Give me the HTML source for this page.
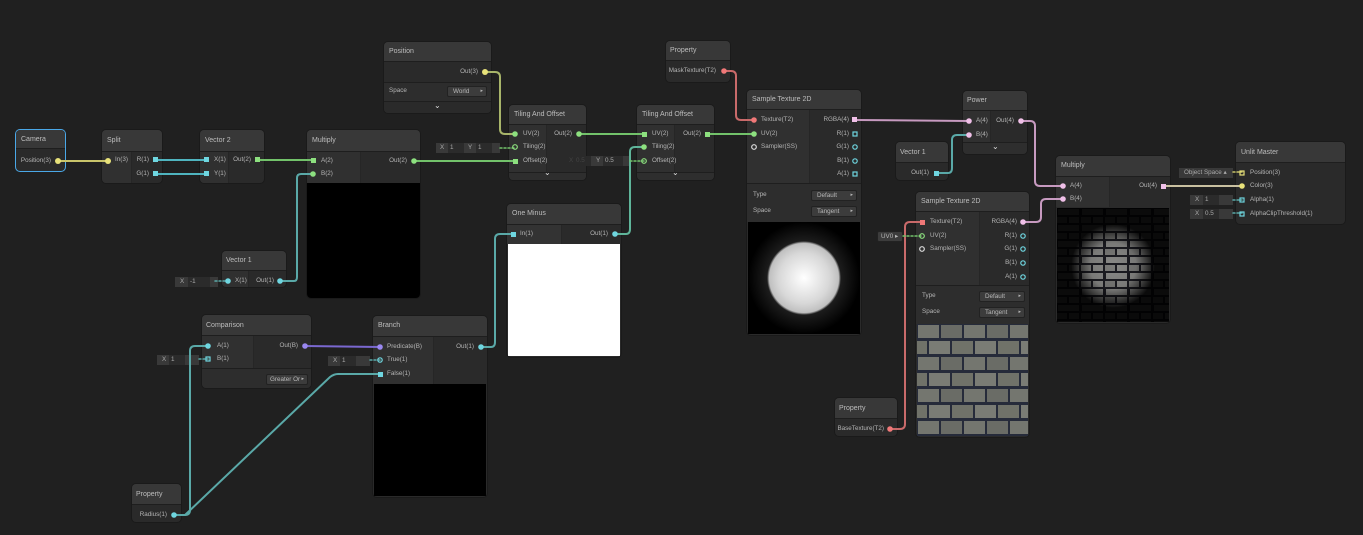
<!DOCTYPE html>
<html><head><meta charset="utf-8"><style>
*{margin:0;padding:0;box-sizing:border-box}
body{width:1363px;height:535px;background:#202020;position:relative;overflow:hidden;font-family:"Liberation Sans",sans-serif;font-size:6.3px;color:#b4b4b4}
.n{position:absolute;background:#2a2a2a;border-radius:4px;overflow:hidden;box-shadow:0 0 0 1px #1a1a1a}
.h{position:absolute;left:0;top:0;right:0;background:#383838;border-bottom:1px solid #1e1e1e}
.ic{position:absolute;left:0;background:#303030;border-right:1px solid #262626}
.sep{position:absolute;left:0;right:0;border-top:1px solid #1e1e1e;background:#2d2d2d}
.t{position:absolute;line-height:10px;white-space:nowrap}
.ht{position:absolute;line-height:10px;white-space:nowrap;color:#bdbdbd;font-size:7px}
.f{position:absolute;background:#393939;height:10px;line-height:10px;color:#aaa;font-size:6.3px;white-space:nowrap}
.fv{position:absolute;background:#2b2b2b;height:10px;top:0}
.dd{position:absolute;background:#3c3c3c;border:1px solid #222;border-radius:2px;height:11px;line-height:9px;font-size:6.3px;color:#b8b8b8;padding-left:5px;white-space:nowrap;overflow:hidden}
.ar{position:absolute;right:3px;top:0;font-size:5px}
.blk{position:absolute;background:#000}
.chev{position:absolute;color:#ddd;font-size:8px;line-height:8px}
</style></head><body>

<svg width="0" height="0" style="position:absolute">
<defs>
<radialGradient id="g1" cx="0.5" cy="0.5" r="0.5">
<stop offset="0" stop-color="#fff"/><stop offset="0.45" stop-color="#d8d8d8"/><stop offset="0.62" stop-color="#c0c0c0"/><stop offset="0.66" stop-color="#1c1c1c"/><stop offset="1" stop-color="#000"/>
</radialGradient>
<pattern id="br" width="46" height="32" patternUnits="userSpaceOnUse" x="0" y="0">
<rect width="46" height="32" fill="#262b3a"/>
<rect x="1" y="1" width="21" height="13" fill="#74766f"/><rect x="24" y="1" width="21" height="13" fill="#6a6c66"/>
<rect x="-11" y="17" width="21" height="13" fill="#707269"/><rect x="12" y="17" width="21" height="13" fill="#7a7c75"/><rect x="35" y="17" width="21" height="13" fill="#707269"/>
</pattern>
<pattern id="br2" width="24" height="16" patternUnits="userSpaceOnUse" x="0" y="0">
<rect width="24" height="16" fill="#1c1c22"/>
<rect x="1" y="1" width="21" height="6" fill="#8a8a88"/><rect x="-11" y="9" width="21" height="6" fill="#7c7c7a"/><rect x="12" y="9" width="10" height="6" fill="#8a8a88"/>
</pattern>
<radialGradient id="g2" cx="0.5" cy="0.5" r="0.5"><stop offset="0" stop-color="#fff"/><stop offset="0.55" stop-color="#ddd"/><stop offset="1" stop-color="#000"/></radialGradient>
<mask id="m2" maskUnits="userSpaceOnUse" x="0" y="0" width="113" height="115"><rect width="113" height="115" fill="#000"/><circle cx="56" cy="58" r="42" fill="url(#g2)"/></mask>
</defs>
</svg>

<!-- Camera -->
<div class="n" style="left:16px;top:130px;width:49px;height:41px;box-shadow:0 0 0 1px #4aa8e8"><div class="h" style="height:19px"></div></div>
<div class="ht" style="left:21px;top:135px">Camera</div>
<div class="t" style="right:1312px;top:156px">Position(3)</div>

<!-- Split -->
<div class="n" style="left:102px;top:130px;width:60px;height:53px"><div class="h" style="height:22px"></div><div class="ic" style="top:22px;width:30px;height:31px"></div></div>
<div class="ht" style="left:107px;top:136px">Split</div>
<div class="t" style="left:115px;top:155px">In(3)</div>
<div class="t" style="right:1214px;top:155px">R(1)</div>
<div class="t" style="right:1214px;top:169px">G(1)</div>

<!-- Vector 2 -->
<div class="n" style="left:200px;top:130px;width:64px;height:53px"><div class="h" style="height:22px"></div><div class="ic" style="top:22px;width:29px;height:31px"></div></div>
<div class="ht" style="left:205px;top:136px">Vector 2</div>
<div class="t" style="left:214px;top:155px">X(1)</div>
<div class="t" style="left:214px;top:169px">Y(1)</div>
<div class="t" style="right:1112px;top:155px">Out(2)</div>

<!-- Multiply -->
<div class="n" style="left:307px;top:130px;width:113px;height:168px"><div class="h" style="height:22px"></div><div class="ic" style="top:22px;width:54px;height:31px"></div><div class="blk" style="left:0;top:53px;width:113px;height:115px"></div></div>
<div class="ht" style="left:312px;top:136px">Multiply</div>
<div class="t" style="left:321px;top:156px">A(2)</div>
<div class="t" style="left:321px;top:169px">B(2)</div>
<div class="t" style="right:956px;top:156px">Out(2)</div>

<!-- Vector 1 -->
<div class="n" style="left:222px;top:251px;width:64px;height:36px"><div class="h" style="height:20px"></div><div class="ic" style="top:20px;width:27px;height:16px"></div></div>
<div class="ht" style="left:226px;top:256px">Vector 1</div>
<div class="t" style="left:235px;top:276px">X(1)</div>
<div class="t" style="right:1089px;top:276px">Out(1)</div>
<div class="f" style="left:175px;top:277px;width:43px;padding-left:5px">X<span class="fv" style="left:13px;width:22px;padding-left:2px">-1</span></div>

<!-- Position -->
<div class="n" style="left:384px;top:42px;width:107px;height:71px"><div class="h" style="height:20px"></div><div class="sep" style="top:40px;height:20px"></div><div class="sep" style="top:59px;height:12px;background:#2a2a2a"></div></div>
<div class="ht" style="left:389px;top:47px">Position</div>
<div class="t" style="right:885px;top:67px">Out(3)</div>
<div class="t" style="left:389px;top:86px">Space</div>
<div class="dd" style="left:447px;top:86px;width:40px">World<span class="ar">▸</span></div>
<div class="chev" style="left:434px;top:102px">⌄</div>

<!-- Tiling 1 -->
<div class="n" style="left:509px;top:105px;width:77px;height:75px"><div class="h" style="height:20px"></div><div class="ic" style="top:20px;width:38px;height:47px"></div><div class="sep" style="top:67px;height:8px;background:#2e2e2e"></div></div>
<div class="ht" style="left:514px;top:110px">Tiling And Offset</div>
<div class="t" style="left:523px;top:129px">UV(2)</div>
<div class="t" style="left:523px;top:142px">Tiling(2)</div>
<div class="t" style="left:523px;top:156px">Offset(2)</div>
<div class="t" style="right:791px;top:129px">Out(2)</div>
<div class="chev" style="left:544px;top:169px">⌄</div>
<div class="f" style="left:436px;top:143px;width:64px;padding-left:4px">X<span class="fv" style="left:12px;width:16px;padding-left:2px">1</span><span style="position:absolute;left:32px">Y</span><span class="fv" style="left:40px;width:16px;padding-left:2px">1</span></div>

<!-- Tiling 2 -->
<div class="n" style="left:637px;top:105px;width:77px;height:75px"><div class="h" style="height:20px"></div><div class="ic" style="top:20px;width:38px;height:47px"></div><div class="sep" style="top:67px;height:8px;background:#2e2e2e"></div></div>
<div class="ht" style="left:642px;top:110px">Tiling And Offset</div>
<div class="t" style="left:652px;top:129px">UV(2)</div>
<div class="t" style="left:652px;top:142px">Tiling(2)</div>
<div class="t" style="left:652px;top:156px">Offset(2)</div>
<div class="t" style="right:662px;top:129px">Out(2)</div>
<div class="chev" style="left:672px;top:169px">⌄</div>
<div class="f" style="left:564px;top:156px;width:27px;padding-left:5px;background:#2a2a2a;color:#444">X<span style="position:absolute;left:12px;color:#444">0.5</span></div>
<div class="f" style="left:591px;top:156px;width:39px;padding-left:5px">Y<span class="fv" style="left:12px;width:20px;padding-left:2px">0.5</span></div>

<!-- Mask property -->
<div class="n" style="left:666px;top:41px;width:64px;height:41px"><div class="h" style="height:20px"></div></div>
<div class="ht" style="left:670px;top:46px">Property</div>
<div class="t" style="right:647px;top:66px">MaskTexture(T2)</div>

<!-- Sample Texture 1 -->
<div class="n" style="left:747px;top:90px;width:114px;height:245px"><div class="h" style="height:20px"></div><div class="ic" style="top:20px;width:63px;height:73px"></div><div class="sep" style="top:93px;height:39px"></div></div>
<svg style="position:absolute;left:748px;top:222px" width="112" height="112"><rect width="112" height="112" fill="#000"/><circle cx="56" cy="56" r="56" fill="url(#g1)"/></svg>
<div class="ht" style="left:752px;top:95px">Sample Texture 2D</div>
<div class="t" style="left:761px;top:115px">Texture(T2)</div>
<div class="t" style="left:761px;top:129px">UV(2)</div>
<div class="t" style="left:761px;top:142px">Sampler(SS)</div>
<div class="t" style="right:514px;top:115px">RGBA(4)</div>
<div class="t" style="right:514px;top:129px">R(1)</div>
<div class="t" style="right:514px;top:142px">G(1)</div>
<div class="t" style="right:514px;top:156px">B(1)</div>
<div class="t" style="right:514px;top:169px">A(1)</div>
<div class="t" style="left:753px;top:190px">Type</div>
<div class="t" style="left:753px;top:206px">Space</div>
<div class="dd" style="left:811px;top:190px;width:46px">Default<span class="ar">▸</span></div>
<div class="dd" style="left:811px;top:206px;width:46px">Tangent<span class="ar">▸</span></div>

<!-- Power -->
<div class="n" style="left:963px;top:91px;width:64px;height:63px"><div class="h" style="height:20px"></div><div class="ic" style="top:20px;width:28px;height:31px"></div><div class="sep" style="top:51px;height:12px;background:#2e2e2e"></div></div>
<div class="ht" style="left:967px;top:96px">Power</div>
<div class="t" style="left:976px;top:116px">A(4)</div>
<div class="t" style="left:976px;top:130px">B(4)</div>
<div class="t" style="right:349px;top:116px">Out(4)</div>
<div class="chev" style="left:992px;top:143px">⌄</div>

<!-- Vector 1 b -->
<div class="n" style="left:896px;top:142px;width:52px;height:38px"><div class="h" style="height:21px"></div></div>
<div class="ht" style="left:900px;top:148px">Vector 1</div>
<div class="t" style="right:434px;top:168px">Out(1)</div>

<!-- Sample Texture 2 -->
<div class="n" style="left:916px;top:192px;width:113px;height:245px"><div class="h" style="height:20px"></div><div class="ic" style="top:20px;width:64px;height:73px"></div><div class="sep" style="top:93px;height:39px"></div></div>
<svg style="position:absolute;left:917px;top:324px" width="111" height="112"><rect width="111" height="112" fill="url(#br)"/></svg>
<div class="ht" style="left:921px;top:197px">Sample Texture 2D</div>
<div class="t" style="left:930px;top:217px">Texture(T2)</div>
<div class="t" style="left:930px;top:231px">UV(2)</div>
<div class="t" style="left:930px;top:244px">Sampler(SS)</div>
<div class="t" style="right:346px;top:217px">RGBA(4)</div>
<div class="t" style="right:346px;top:231px">R(1)</div>
<div class="t" style="right:346px;top:244px">G(1)</div>
<div class="t" style="right:346px;top:258px">B(1)</div>
<div class="t" style="right:346px;top:272px">A(1)</div>
<div class="t" style="left:922px;top:291px">Type</div>
<div class="t" style="left:922px;top:307px">Space</div>
<div class="dd" style="left:979px;top:291px;width:46px">Default<span class="ar">▸</span></div>
<div class="dd" style="left:979px;top:307px;width:46px">Tangent<span class="ar">▸</span></div>
<div class="dd" style="left:877px;top:231px;width:26px;padding-left:3px">UV0 ▸</div>

<!-- Base property -->
<div class="n" style="left:835px;top:398px;width:62px;height:38px"><div class="h" style="height:21px"></div></div>
<div class="ht" style="left:839px;top:404px">Property</div>
<div class="t" style="right:479px;top:424px">BaseTexture(T2)</div>

<!-- Multiply 2 -->
<div class="n" style="left:1056px;top:156px;width:114px;height:167px"><div class="h" style="height:21px"></div><div class="ic" style="top:21px;width:54px;height:30px"></div><div class="blk" style="left:1px;top:52px;width:112px;height:114px"></div></div>
<svg style="position:absolute;left:1057px;top:208px" width="112" height="114"><rect width="112" height="114" fill="url(#br2)" opacity="0.08"/><rect width="112" height="114" fill="url(#br2)" mask="url(#m2)"/></svg>
<div class="ht" style="left:1061px;top:161px">Multiply</div>
<div class="t" style="left:1070px;top:181px">A(4)</div>
<div class="t" style="left:1070px;top:194px">B(4)</div>
<div class="t" style="right:206px;top:181px">Out(4)</div>

<!-- Unlit Master -->
<div class="n" style="left:1236px;top:142px;width:109px;height:82px"><div class="h" style="height:21px"></div></div>
<div class="ht" style="left:1241px;top:148px">Unlit Master</div>
<div class="t" style="left:1250px;top:168px">Position(3)</div>
<div class="t" style="left:1250px;top:181px">Color(3)</div>
<div class="t" style="left:1250px;top:195px">Alpha(1)</div>
<div class="t" style="left:1250px;top:209px">AlphaClipThreshold(1)</div>
<div class="f" style="left:1179px;top:168px;width:54px;padding-left:5px">Object Space ▴</div>
<div class="f" style="left:1190px;top:195px;width:43px;padding-left:5px">X<span class="fv" style="left:13px;width:16px;padding-left:2px">1</span></div>
<div class="f" style="left:1190px;top:209px;width:43px;padding-left:5px">X<span class="fv" style="left:13px;width:16px;padding-left:2px">0.5</span></div>

<!-- One Minus -->
<div class="n" style="left:507px;top:204px;width:114px;height:153px"><div class="h" style="height:21px"></div><div class="ic" style="top:21px;width:55px;height:19px;background:#333"></div><div style="position:absolute;left:1px;top:40px;width:112px;height:112px;background:#fff"></div></div>
<div class="ht" style="left:512px;top:209px">One Minus</div>
<div class="t" style="left:520px;top:229px">In(1)</div>
<div class="t" style="right:755px;top:229px">Out(1)</div>

<!-- Comparison -->
<div class="n" style="left:202px;top:315px;width:109px;height:73px"><div class="h" style="height:21px"></div><div class="ic" style="top:21px;width:52px;height:32px"></div><div class="sep" style="top:53px;height:20px"></div></div>
<div class="ht" style="left:206px;top:321px">Comparison</div>
<div class="t" style="left:217px;top:341px">A(1)</div>
<div class="t" style="left:217px;top:354px">B(1)</div>
<div class="t" style="right:1065px;top:341px">Out(B)</div>
<div class="dd" style="left:266px;top:374px;width:42px;padding-left:3px">Greater Or<span class="ar">▸</span></div>
<div class="f" style="left:157px;top:355px;width:42px;padding-left:5px">X<span class="fv" style="left:12px;width:16px;padding-left:2px">1</span></div>

<!-- Branch -->
<div class="n" style="left:373px;top:316px;width:114px;height:181px"><div class="h" style="height:21px"></div><div class="ic" style="top:21px;width:61px;height:47px"></div><div class="blk" style="left:1px;top:68px;width:112px;height:112px"></div></div>
<div class="ht" style="left:378px;top:321px">Branch</div>
<div class="t" style="left:387px;top:342px">Predicate(B)</div>
<div class="t" style="left:387px;top:355px">True(1)</div>
<div class="t" style="left:387px;top:369px">False(1)</div>
<div class="t" style="right:889px;top:342px">Out(1)</div>
<div class="f" style="left:328px;top:356px;width:42px;padding-left:5px">X<span class="fv" style="left:12px;width:16px;padding-left:2px">1</span></div>

<!-- Radius -->
<div class="n" style="left:132px;top:484px;width:49px;height:38px"><div class="h" style="height:21px"></div></div>
<div class="ht" style="left:136px;top:490px">Property</div>
<div class="t" style="right:1196px;top:510px">Radius(1)</div>

<!-- wires & ports -->
<svg width="1363" height="535" style="position:absolute;left:0;top:0" fill="none" stroke-width="2" stroke-linecap="round">
<path d="M58 161 L108 161" stroke="#c9c46a"/>
<path d="M156 160 L206 160 M156 174 L206 174" stroke="#4fb4bf"/>
<path d="M258 160 L313 160" stroke="#72c26a"/>
<path d="M280 281 L294 281 Q297 281 297 277 L297 178 Q297 174 301 174 L313 174" stroke="#5aa9a8"/>
<path d="M414 161 L515 161" stroke="#72c26a"/>
<path d="M485 72 L495 72 Q500 72 500 77 L500 129 Q500 134 505 134 L515 134" stroke="#a8b56a"/>
<path d="M579 134 L644 134" stroke="#72c26a"/>
<path d="M615 234 L626 234 Q630 234 630 229 L630 152 Q630 147 635 147 L644 147" stroke="#5fb59a"/>
<path d="M708 134 L754 134" stroke="#72c26a"/>
<path d="M724 71 L731 71 Q736 71 736 76 L736 115 Q736 120 741 120 L754 120" stroke="#c96a6a"/>
<path d="M855 120 L969 121" stroke="#c79ac0"/>
<path d="M936 173 L948 173 Q952 173 952 168 L952 140 Q952 135 957 135 L969 135" stroke="#5aa9a8"/>
<path d="M1021 121 L1030 121 Q1035 121 1035 126 L1035 181 Q1035 186 1040 186 L1063 186" stroke="#c79ac0"/>
<path d="M1023 222 L1036 222 Q1041 222 1041 217 L1041 204 Q1041 199 1046 199 L1063 199" stroke="#c79ac0"/>
<path d="M1164 186 L1242 186" stroke="#c9c0a0"/>
<path d="M890 429 L900 429 Q905 429 905 424 L905 227 Q905 222 910 222 L922 222" stroke="#c96a6a"/>
<path d="M305 346 L380 347" stroke="#7a68d0"/>
<path d="M481 347 L491 347 Q495 347 495 342 L495 239 Q495 234 500 234 L513 234" stroke="#5aa9a8"/>
<path d="M174 515 L185 515 Q190 515 190 510 L190 351 Q190 346 195 346 L208 346" stroke="#5aa9a8"/>
<path d="M185 515 L330 377 Q334 374 338 374 L380 374" stroke="#5aa9a8"/>
<g stroke-width="1.5" stroke-dasharray="2 2"><path d="M215 281 L228 281" stroke="#5aa9a8"/><path d="M500 148 L515 148 M630 161 L644 161" stroke="#72c26a"/><path d="M199 359 L208 359 M370 360 L380 360" stroke="#5aa9a8"/><path d="M903 236 L922 236" stroke="#72c26a"/><path d="M1233 172 L1242 172" stroke="#c9c46a"/><path d="M1233 200 L1242 200 M1233 213 L1242 213" stroke="#5aa9a8"/></g>
<g stroke="none">
<circle cx="58" cy="161" r="3" fill="#e8e27a"/><circle cx="108" cy="161" r="3" fill="#e8e27a"/>
<rect x="153" y="157" width="5" height="5" fill="#6fd6e0"/><rect x="153" y="171" width="5" height="5" fill="#6fd6e0"/>
<rect x="204" y="157" width="5" height="5" fill="#6fd6e0"/><rect x="204" y="171" width="5" height="5" fill="#6fd6e0"/>
<rect x="255" y="157" width="5" height="5" fill="#8de07f"/><rect x="311" y="158" width="5" height="5" fill="#8de07f"/><circle cx="313" cy="174" r="2.8" fill="#8de07f"/>
<circle cx="414" cy="161" r="2.8" fill="#8de07f"/>
<circle cx="280" cy="281" r="2.8" fill="#6fd6e0"/><circle cx="228" cy="281" r="2.8" fill="#6fd6e0"/>
<circle cx="485" cy="72" r="3" fill="#e8e27a"/>
<circle cx="515" cy="134" r="2.8" fill="#8de07f"/><circle cx="515" cy="147" r="2.3" fill="none" stroke="#8de07f" stroke-width="1.2"/><rect x="513" y="159" width="5" height="5" fill="#8de07f"/>
<circle cx="579" cy="134" r="2.8" fill="#8de07f"/>
<rect x="642" y="132" width="5" height="5" fill="#8de07f"/><circle cx="644" cy="147" r="2.8" fill="#8de07f"/><circle cx="644" cy="161" r="2.3" fill="none" stroke="#8de07f" stroke-width="1.2"/>
<rect x="705" y="132" width="5" height="5" fill="#8de07f"/>
<circle cx="724" cy="71" r="2.8" fill="#f07878"/>
<circle cx="754" cy="120" r="2.8" fill="#f07878"/><circle cx="754" cy="134" r="2.8" fill="#8de07f"/><circle cx="754" cy="147" r="2.3" fill="none" stroke="#ddd" stroke-width="1.2"/>
<rect x="852" y="117" width="5" height="5" fill="#f0c0e8"/>
<g fill="none" stroke="#6fd6e0" stroke-width="1.2"><rect x="853" y="132" width="4" height="4"/><circle cx="855" cy="147" r="2.2"/><circle cx="855" cy="161" r="2.2"/><rect x="853" y="172" width="4" height="4"/>
<circle cx="1023" cy="236" r="2.2"/><circle cx="1023" cy="249" r="2.2"/><circle cx="1023" cy="263" r="2.2"/><circle cx="1023" cy="277" r="2.2"/>
<rect x="1240" y="198" width="4" height="4"/><rect x="1240" y="212" width="4" height="4"/><rect x="206" y="357" width="4" height="4"/><circle cx="380" cy="360" r="2.2"/></g>
<circle cx="969" cy="121" r="2.8" fill="#f0c0e8"/><circle cx="969" cy="135" r="2.8" fill="#f0c0e8"/><circle cx="1021" cy="121" r="2.8" fill="#f0c0e8"/>
<rect x="934" y="171" width="5" height="5" fill="#6fd6e0"/>
<rect x="920" y="220" width="5" height="5" fill="#f07878"/><circle cx="922" cy="236" r="2.3" fill="none" stroke="#8de07f" stroke-width="1.2"/><circle cx="922" cy="249" r="2.3" fill="none" stroke="#ddd" stroke-width="1.2"/>
<circle cx="1023" cy="222" r="2.8" fill="#f0c0e8"/>
<circle cx="890" cy="429" r="2.8" fill="#f07878"/>
<circle cx="1063" cy="186" r="2.8" fill="#f0c0e8"/><circle cx="1063" cy="199" r="2.8" fill="#f0c0e8"/><rect x="1161" y="184" width="5" height="5" fill="#f0c0e8"/>
<rect x="1240" y="171" width="4" height="4" fill="none" stroke="#e8e27a" stroke-width="1.2"/><circle cx="1242" cy="186" r="2.8" fill="#e8e27a"/>
<circle cx="615" cy="234" r="2.8" fill="#6fd6e0"/><rect x="511" y="232" width="5" height="5" fill="#6fd6e0"/>
<circle cx="208" cy="346" r="2.8" fill="#6fd6e0"/><circle cx="305" cy="346" r="2.8" fill="#9a88f0"/>
<circle cx="380" cy="347" r="2.8" fill="#9a88f0"/><rect x="378" y="372" width="5" height="5" fill="#6fd6e0"/><circle cx="481" cy="347" r="2.8" fill="#6fd6e0"/>
<circle cx="174" cy="515" r="2.8" fill="#6fd6e0"/>
</g>
</svg>
</body></html>
